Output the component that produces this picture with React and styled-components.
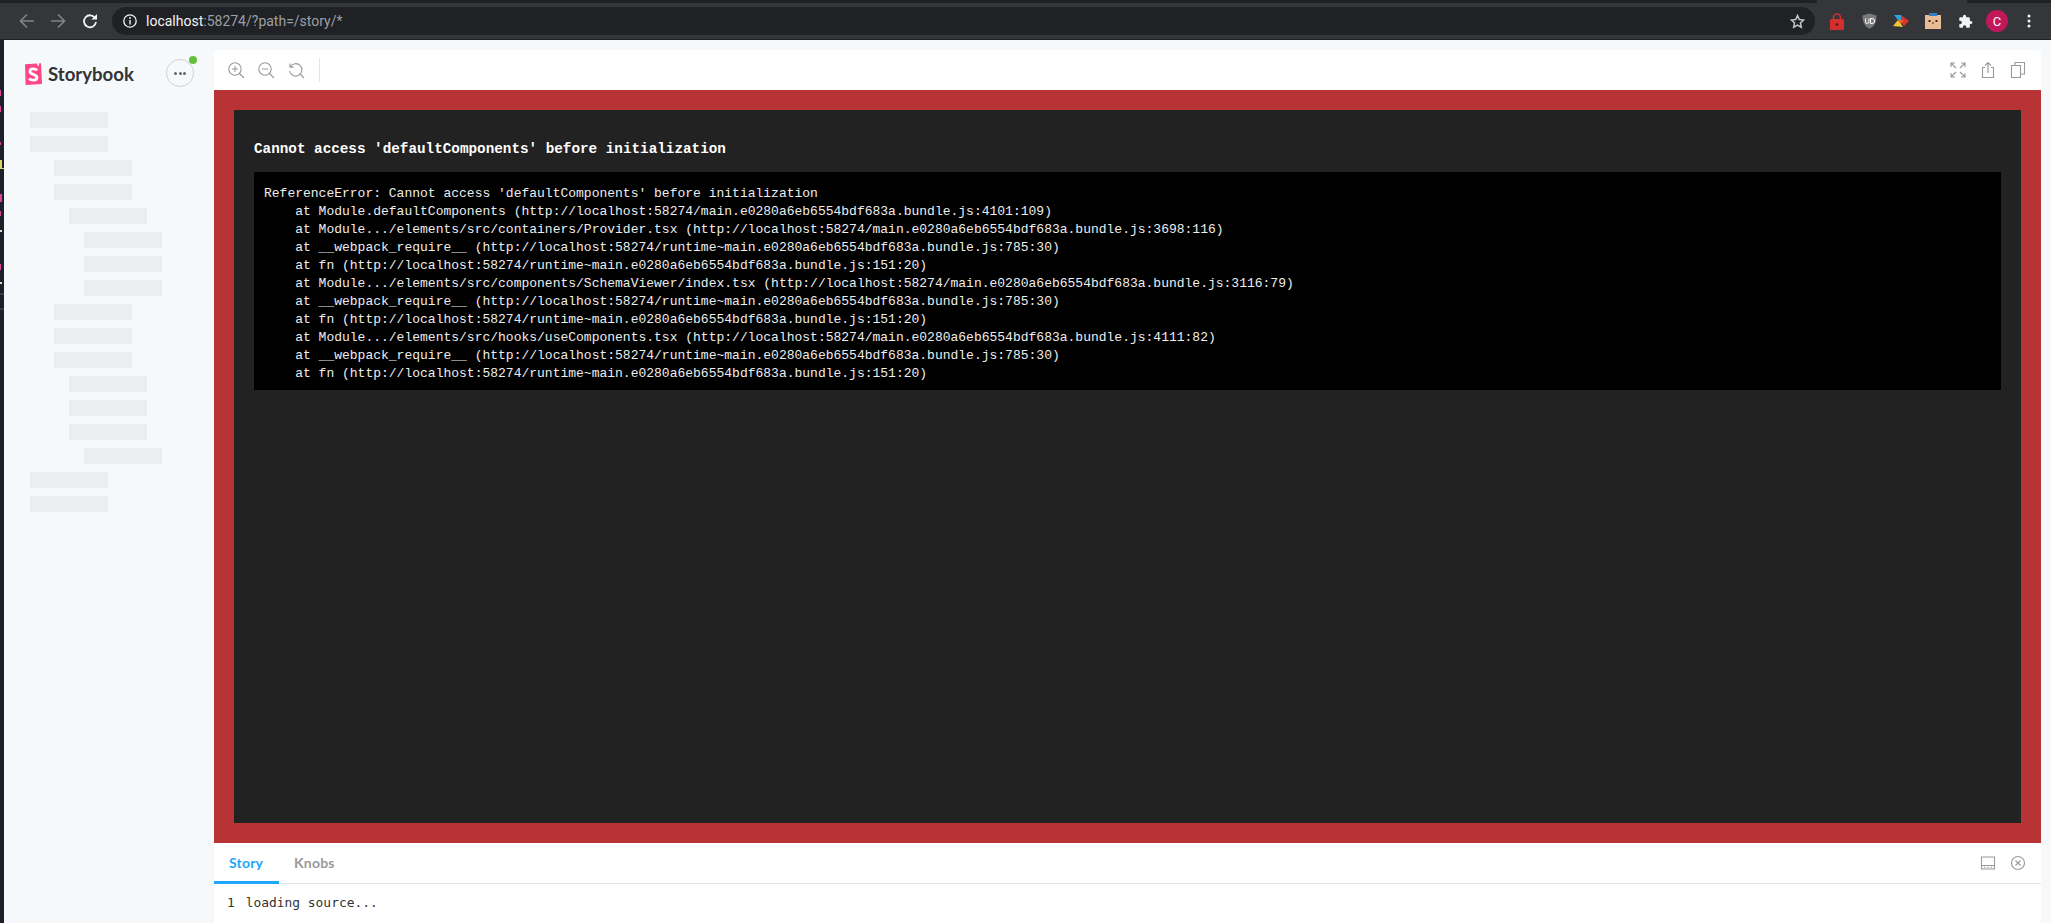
import React from 'react';
import styled, { createGlobalStyle } from 'styled-components';

const GlobalStyle = createGlobalStyle`
  html, body {
    margin: 0;
    padding: 0;
    height: 100%;
    overflow: hidden;
    background: #f6f9fc;
  }
  #root {
    height: 100%;
  }
`;

const Page = styled.div`
  width: 2051px;
  height: 923px;
  display: flex;
  flex-direction: column;
  font-family: "Lato", "Liberation Sans", sans-serif;
`;

/* browser chrome */
const TabStrip = styled.div`
  height: 3px;
  background: #202124;
  padding-left: 1817px;
`;

const TabGap = styled.div`
  width: 150px;
  height: 3px;
  background: #35363a;
`;

const BrowserBar = styled.div`
  height: 36px;
  background: #35363a;
  border-bottom: 1px solid #1f2023;
  display: flex;
  align-items: center;
  padding-left: 11px;
`;

const NavButton = styled.div`
  width: 32px;
  height: 32px;
  display: flex;
  align-items: center;
  justify-content: center;
  margin-right: ${p => p.$gap || 0}px;
`;

const UrlPill = styled.div`
  width: 1703px;
  height: 28px;
  flex: none;
  background: #202124;
  border-radius: 14px;
  display: flex;
  align-items: center;
  padding: 0 10px 0 11px;
  box-sizing: border-box;
  margin-left: 6px;
`;

const UrlText = styled.div`
  margin-left: 9px;
  flex: 1;
  font-family: "Roboto", "Liberation Sans", sans-serif;
  font-size: 14px;
  color: #9aa0a6;
  white-space: nowrap;
`;

const UrlHost = styled.span`
  color: #f1f3f4;
`;

const ExtensionRow = styled.div`
  display: flex;
  align-items: center;
  margin-left: 6px;
`;

const ExtensionSlot = styled.div`
  width: 32px;
  height: 28px;
  display: flex;
  align-items: center;
  justify-content: center;
`;

const Avatar = styled.div`
  width: 22px;
  height: 22px;
  border-radius: 50%;
  background: #c2185b;
  color: #fff;
  font-family: "Roboto", sans-serif;
  font-size: 13px;
  display: flex;
  align-items: center;
  justify-content: center;
`;

/* page under the browser bar */
const Body = styled.div`
  flex: 1;
  display: flex;
  min-height: 0;
`;

const WindowBehind = styled.div`
  width: 4px;
  flex: none;
  background:
    linear-gradient(#d6479b, #d6479b) 0 50px / 1px 6px no-repeat,
    linear-gradient(#d6479b, #d6479b) 0 66px / 1px 6px no-repeat,
    linear-gradient(#d6479b, #d6479b) 0 102px / 1px 3px no-repeat,
    linear-gradient(#d9d36a, #d9d36a) 0 120px / 2px 8px no-repeat,
    linear-gradient(#d9d36a, #d9d36a) 0 128px / 4px 1px no-repeat,
    linear-gradient(#d6479b, #d6479b) 0 154px / 2px 8px no-repeat,
    linear-gradient(#d6479b, #d6479b) 0 171px / 1px 5px no-repeat,
    linear-gradient(#d8d8d8, #d8d8d8) 0 190px / 2px 2px no-repeat,
    linear-gradient(#d6479b, #d6479b) 0 224px / 1px 6px no-repeat,
    linear-gradient(#d8d8d8, #d8d8d8) 0 242px / 2px 2px no-repeat,
    linear-gradient(#3a3c47, #3a3c47) 0 253px / 4px 2px no-repeat,
    linear-gradient(#3a3c47, #3a3c47) 0 268px / 4px 2px no-repeat,
    #1e2029;
`;

const Sidebar = styled.aside`
  width: 210px;
  flex: none;
  background: #f6f9fc;
  box-sizing: border-box;
  padding: 10px 0 0 20px;
`;

const SidebarHead = styled.div`
  height: 46px;
  display: flex;
  align-items: center;
  margin-bottom: 16px;
`;

const Brand = styled.div`
  display: flex;
  align-items: center;
  gap: 6px;
  width: 142px;
  padding-top: 2px;
  font-size: 18.6px;
  font-weight: 700;
  color: #333;
`;

const MenuButton = styled.div`
  position: relative;
  width: 28px;
  height: 28px;
  box-sizing: border-box;
  border: 1px solid #cfd2d4;
  border-radius: 50%;
  display: flex;
  align-items: center;
  justify-content: center;
  gap: 1.5px;
`;

const MenuDot = styled.span`
  width: 3px;
  height: 3px;
  border-radius: 50%;
  background: #666;
`;

const StatusDot = styled.span`
  position: absolute;
  top: -4px;
  right: -4px;
  width: 8px;
  height: 8px;
  border-radius: 50%;
  background: #66bf3c;
`;

const Skeletons = styled.div`
  display: flex;
  flex-direction: column;
  gap: 8px;
  padding-left: 6px;
`;

const Skeleton = styled.div`
  width: 78px;
  height: 16px;
  background: #ecedee;
  margin-left: ${p => [0, 24, 39, 54][p.$depth]}px;
`;

/* main panel */
const Main = styled.main`
  flex: 1;
  min-width: 0;
  display: flex;
  flex-direction: column;
  padding: 10px 10px 0 0;
`;

const PreviewBar = styled.div`
  height: 40px;
  flex: none;
  box-sizing: border-box;
  background: #fff;
  border-radius: 4px 4px 0 0;
  display: flex;
  align-items: center;
  padding: 0 8px 0 7px;
`;

const ToolButton = styled.div`
  width: 30px;
  height: 30px;
  display: flex;
  align-items: center;
  justify-content: center;
`;

const Divider = styled.div`
  width: 1px;
  height: 24px;
  background: #e5e5e5;
  margin-left: 8px;
`;

const Spacer = styled.div`
  flex: 1;
`;

const Preview = styled.div`
  flex: 1;
  min-height: 0;
  background: #b73336;
  padding: 20px;
  display: flex;
`;

const ErrorBox = styled.div`
  flex: 1;
  min-width: 0;
  background: #222;
  padding: 28px 20px;
  font-family: "Liberation Mono", "Courier New", monospace;
`;

const ErrorTitle = styled.div`
  height: 22px;
  line-height: 22px;
  font-size: 14.3px;
  font-weight: 700;
  color: #fff;
  margin-bottom: 12px;
`;

const Stack = styled.pre`
  margin: 0;
  padding: 13px 10px 7px;
  background: #000;
  color: #eee;
  font-family: inherit;
  font-size: 13px;
  line-height: 18px;
  height: 198px;
`;

const AddonPanel = styled.div`
  height: 80px;
  flex: none;
  background: #fff;
`;

const AddonTabs = styled.div`
  height: 41px;
  box-sizing: border-box;
  border-bottom: 1px solid #e5e5e5;
  display: flex;
  align-items: center;
  padding-right: 8px;
`;

const AddonTab = styled.div`
  height: 40px;
  width: ${p => p.$width}px;
  box-sizing: border-box;
  padding-left: 15px;
  display: flex;
  align-items: center;
  font-size: 14px;
  letter-spacing: 0.2px;
  font-weight: 700;
  color: ${p => (p.$active ? '#1ea7fd' : '#999')};
  border-bottom: 3px solid ${p => (p.$active ? '#1ea7fd' : 'transparent')};
  margin-bottom: -1px;
`;

const SourceLine = styled.div`
  display: flex;
  gap: 11px;
  padding: 10px 0 0 13px;
  font-family: "DejaVu Sans Mono", "Liberation Mono", monospace;
  font-size: 12.9px;
  line-height: 18px;
  color: #333;
`;

const ToolIcon = ({ children }) => (
  <svg width="18" height="18" viewBox="0 0 18 18" fill="none" stroke="#999" strokeWidth="1.1">
    {children}
  </svg>
);

const Logo = () => (
  <svg width="18" height="22" viewBox="0 0 18 22">
    <path d="M1 1.2 L13.400 0.400 L13.200 3.200 L14.800 2.400 L15.200 0.300 L17 0.200 L18 21 L1.600 22 Z" fill="#ff4785" />
    <path d="M13 7.400 C11.400 5.400 6 5.200 6 8.400 C6 12 13 10.600 13 14.600 C13 18 7 17.800 5 15.600" fill="none" stroke="#fff" strokeWidth="2.800" />
  </svg>
);

const errorLines = [
  'ReferenceError: Cannot access \'defaultComponents\' before initialization',
  '    at Module.defaultComponents (http://localhost:58274/main.e0280a6eb6554bdf683a.bundle.js:4101:109)',
  '    at Module.../elements/src/containers/Provider.tsx (http://localhost:58274/main.e0280a6eb6554bdf683a.bundle.js:3698:116)',
  '    at __webpack_require__ (http://localhost:58274/runtime~main.e0280a6eb6554bdf683a.bundle.js:785:30)',
  '    at fn (http://localhost:58274/runtime~main.e0280a6eb6554bdf683a.bundle.js:151:20)',
  '    at Module.../elements/src/components/SchemaViewer/index.tsx (http://localhost:58274/main.e0280a6eb6554bdf683a.bundle.js:3116:79)',
  '    at __webpack_require__ (http://localhost:58274/runtime~main.e0280a6eb6554bdf683a.bundle.js:785:30)',
  '    at fn (http://localhost:58274/runtime~main.e0280a6eb6554bdf683a.bundle.js:151:20)',
  '    at Module.../elements/src/hooks/useComponents.tsx (http://localhost:58274/main.e0280a6eb6554bdf683a.bundle.js:4111:82)',
  '    at __webpack_require__ (http://localhost:58274/runtime~main.e0280a6eb6554bdf683a.bundle.js:785:30)',
  '    at fn (http://localhost:58274/runtime~main.e0280a6eb6554bdf683a.bundle.js:151:20)',
];

const skeletonDepths = [0, 0, 1, 1, 2, 3, 3, 3, 1, 1, 1, 2, 2, 2, 3, 0, 0];

const App = () => (
  <Page>
    <GlobalStyle />
    <TabStrip>
      <TabGap />
    </TabStrip>
    <BrowserBar>
      <NavButton $gap={-1}>
        <svg width="16" height="16" viewBox="0 0 16 16" fill="none" stroke="#7f8387" strokeWidth="1.700">
          <path d="M15 8H1.500M8 1.500 1.500 8 8 14.500" />
        </svg>
      </NavButton>
      <NavButton>
        <svg width="16" height="16" viewBox="0 0 16 16" fill="none" stroke="#7f8387" strokeWidth="1.700">
          <path d="M1 8h13.500M8 1.500 14.500 8 8 14.500" />
        </svg>
      </NavButton>
      <NavButton>
        <svg width="16" height="16" viewBox="0 0 16 16" fill="none">
          <path d="M13.200 5.200A6 6 0 1 0 14 9" stroke="#f1f3f4" strokeWidth="1.800" />
          <path d="M15 1v5.600H9.400z" fill="#f1f3f4" />
        </svg>
      </NavButton>
      <UrlPill>
        <svg width="14" height="14" viewBox="0 0 14 14" fill="none">
          <circle cx="7" cy="7" r="6.200" stroke="#f1f3f4" strokeWidth="1.300" />
          <path d="M7 6v4.400" stroke="#f1f3f4" strokeWidth="1.400" />
          <circle cx="7" cy="4" r="0.900" fill="#f1f3f4" />
        </svg>
        <UrlText>
          <UrlHost>localhost</UrlHost>:58274/?path=/story/*
        </UrlText>
        <svg width="15" height="15" viewBox="0 0 24 24" fill="none" stroke="#c4c7c9" strokeWidth="2.400">
          <path d="M12 2.500l2.900 6.300 6.900.8-5.100 4.700 1.400 6.800-6.100-3.400-6.100 3.400 1.400-6.800-5.100-4.700 6.900-.8z" />
        </svg>
      </UrlPill>
      <ExtensionRow>
        <ExtensionSlot>
          <svg width="14" height="17" viewBox="0 0 14 17">
            <path d="M3.500 7V4.500a3.500 3.500 0 0 1 7 0V7" fill="none" stroke="#d32f2f" strokeWidth="1.600" />
            <rect y="6" width="14" height="11" rx="1.500" fill="#d32f2f" />
            <circle cx="7" cy="11.500" r="1.300" fill="#5a1414" />
          </svg>
        </ExtensionSlot>
        <ExtensionSlot>
          <svg width="15" height="16" viewBox="0 0 15 16">
            <path d="M7.500 0.500 14.500 2.500C14.500 9 12.500 13.500 7.500 15.800 2.500 13.500 .5 9 .5 2.500z" fill="#7a7a7a" />
            <path d="M3.500 5.500v3.200a1.700 1.700 0 0 0 3.400 0V5.500M8.500 5.500h1.600a2 2 0 0 1 0 5H8.500z" fill="none" stroke="#fff" strokeWidth="1" />
          </svg>
        </ExtensionSlot>
        <ExtensionSlot>
          <svg width="16" height="14" viewBox="0 0 16 14">
            <path d="M1 1h7l3 5H5z" fill="#2aa5dc" />
            <path d="M8 1l8 6-5 5-3-4z" fill="#d8342c" />
            <path d="M5 6h6l-3 4z" fill="#e8632a" />
            <path d="M0 12l5-6 3 4 2 3z" fill="#f6c432" />
          </svg>
        </ExtensionSlot>
        <ExtensionSlot>
          <svg width="16" height="16" viewBox="0 0 16 16">
            <rect y="2" width="16" height="14" fill="#e8bd96" />
            <rect x="4" width="8" height="3" fill="#2f7fc6" />
            <rect x="3.500" y="7" width="2" height="2" fill="#3a2b20" />
            <rect x="10.500" y="7" width="2" height="2" fill="#3a2b20" />
            <rect x="7" y="9.500" width="2" height="1" fill="#3a2b20" />
          </svg>
        </ExtensionSlot>
        <ExtensionSlot>
          <svg width="15" height="15" viewBox="0 0 24 24" fill="#f1f3f4">
            <path d="M20.500 11H19V7a2 2 0 0 0-2-2h-4V3.500a2.500 2.500 0 0 0-5 0V5H4a2 2 0 0 0-2 2v3.800h1.500a2.700 2.700 0 0 1 0 5.400H2V20a2 2 0 0 0 2 2h3.800v-1.500a2.700 2.700 0 0 1 5.400 0V22H17a2 2 0 0 0 2-2v-4h1.500a2.500 2.500 0 0 0 0-5z" />
          </svg>
        </ExtensionSlot>
        <ExtensionSlot>
          <Avatar>C</Avatar>
        </ExtensionSlot>
        <ExtensionSlot>
          <svg width="4" height="14" viewBox="0 0 4 14" fill="#f1f3f4">
            <circle cx="2" cy="2" r="1.500" />
            <circle cx="2" cy="7" r="1.500" />
            <circle cx="2" cy="12" r="1.500" />
          </svg>
        </ExtensionSlot>
      </ExtensionRow>
    </BrowserBar>
    <Body>
      <WindowBehind />
      <Sidebar>
        <SidebarHead>
          <Brand>
            <Logo />
            Storybook
          </Brand>
          <MenuButton>
            <MenuDot />
            <MenuDot />
            <MenuDot />
            <StatusDot />
          </MenuButton>
        </SidebarHead>
        <Skeletons>
          {skeletonDepths.map((depth, i) => (
            <Skeleton key={i} $depth={depth} />
          ))}
        </Skeletons>
      </Sidebar>
      <Main>
        <PreviewBar>
          <ToolButton>
            <ToolIcon>
              <circle cx="8" cy="8" r="6.200" />
              <path d="M12.500 12.500 17 17M8 5v6M5 8h6" />
            </ToolIcon>
          </ToolButton>
          <ToolButton>
            <ToolIcon>
              <circle cx="8" cy="8" r="6.200" />
              <path d="M12.500 12.500 17 17M5 8h6" />
            </ToolIcon>
          </ToolButton>
          <ToolButton>
            <ToolIcon>
              <path d="M3 2.500v3.600h3.600M3.200 6A6.200 6.200 0 1 1 2.600 10M12.500 12.500 17 17" />
            </ToolIcon>
          </ToolButton>
          <Divider />
          <Spacer />
          <ToolButton>
            <ToolIcon>
              <path d="M2 2l5 5M16 2l-5 5M2 16l5-5M16 16l-5-5M2 6V2h4M12 2h4v4M2 12v4h4M16 12v4h-4" />
            </ToolIcon>
          </ToolButton>
          <ToolButton>
            <ToolIcon>
              <path d="M6 6.500H3.500v10h11v-10H12M9 12V2M6 4.500 9 1.500l3 3" />
            </ToolIcon>
          </ToolButton>
          <ToolButton>
            <ToolIcon>
              <path d="M6 4.500H2.500v12h9V13M6 4.500V1.500h9.500V13H11.500M6 4.500h5.500V13" />
            </ToolIcon>
          </ToolButton>
        </PreviewBar>
        <Preview>
          <ErrorBox>
            <ErrorTitle>Cannot access 'defaultComponents' before initialization</ErrorTitle>
            <Stack>{errorLines.join('\n')}</Stack>
          </ErrorBox>
        </Preview>
        <AddonPanel>
          <AddonTabs>
            <AddonTab $active $width={65}>Story</AddonTab>
            <AddonTab $width={71}>Knobs</AddonTab>
            <Spacer />
            <ToolButton>
              <ToolIcon>
                <path d="M2.500 3h13v12h-13zM2.500 11.500h13" />
                <path d="M5 13.200h1.500M8.200 13.200h1.500M11.400 13.200h1.500" />
              </ToolIcon>
            </ToolButton>
            <ToolButton>
              <ToolIcon>
                <circle cx="9" cy="9" r="6.500" />
                <path d="M6.500 6.500l5 5M11.500 6.500l-5 5" />
              </ToolIcon>
            </ToolButton>
          </AddonTabs>
          <SourceLine>
            <span>1</span>
            <span>loading source...</span>
          </SourceLine>
        </AddonPanel>
      </Main>
    </Body>
  </Page>
);

export default App;
